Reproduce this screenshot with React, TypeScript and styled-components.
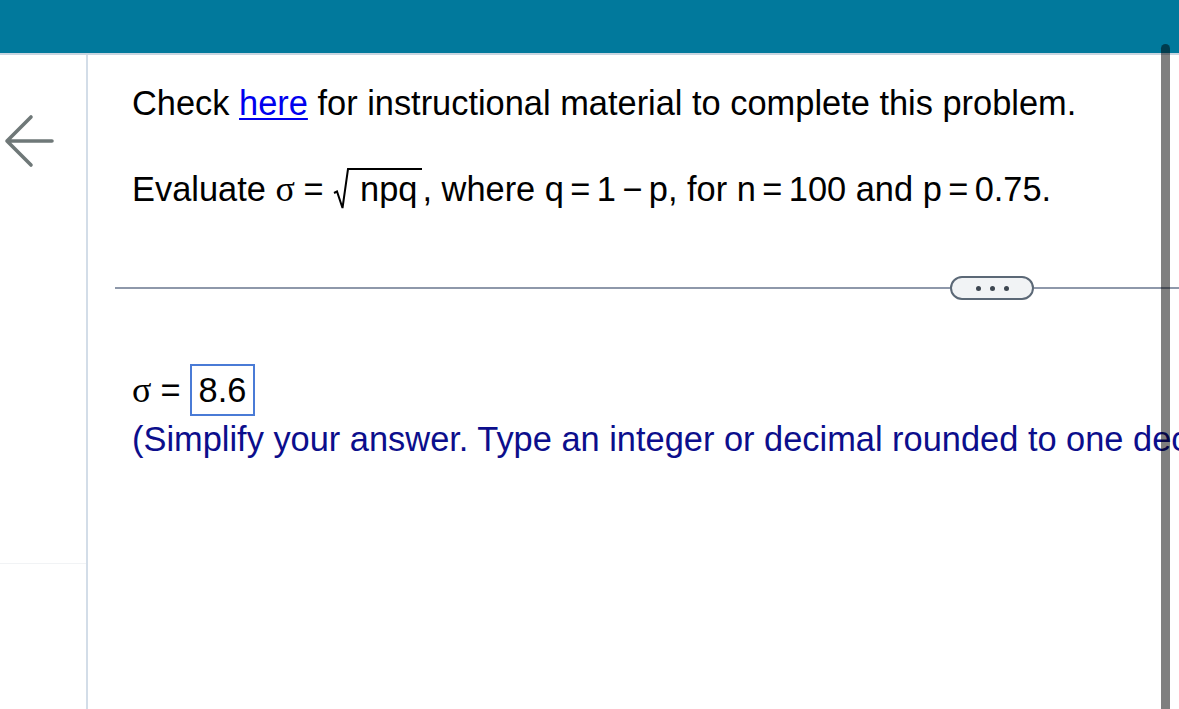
import React from 'react'
import styled, { createGlobalStyle } from 'styled-components'

const GlobalStyle = createGlobalStyle`
  html, body {
    margin: 0;
    padding: 0;
    background: #ffffff;
    overflow: hidden;
  }
  body {
    font-family: 'Liberation Sans', Arial, sans-serif;
  }
`

const Page = styled.div`
  position: relative;
  width: 1179px;
  height: 709px;
  display: flex;
  flex-direction: column;
  overflow: hidden;
  background: #ffffff;
`

const TopBar = styled.header`
  flex: 0 0 53px;
  background: #01799c;
  border-bottom: 2px solid #c9d5e0;
`

const Body = styled.div`
  flex: 1;
  display: flex;
  min-height: 0;
`

const Rail = styled.aside`
  flex: 0 0 86px;
  border-right: 2px solid #d3dde8;
  display: flex;
  flex-direction: column;
`

const BackButton = styled.button`
  margin: 59px 0 0 2px;
  width: 54px;
  height: 56px;
  padding: 0;
  border: none;
  background: transparent;
  display: flex;
  align-items: center;
  justify-content: center;
  cursor: pointer;
`

const RailRule = styled.div`
  margin-top: 393px;
  height: 1px;
  background: #f1f3f5;
`

const Content = styled.main`
  flex: 1;
  min-width: 0;
  padding: 29px 0 0 27px;
  overflow: hidden;
  font-size: 34.4px;
  line-height: 39px;
  color: #000000;
`

const Para = styled.p<{ $gap?: number }>`
  margin: 0 0 ${({ $gap }) => $gap ?? 0}px 17px;
  white-space: nowrap;
`

const Link = styled.a`
  color: #0000ee;
  text-decoration: underline;
  text-underline-offset: 3px;
  text-decoration-thickness: 2px;
`

const Sigma = styled.span`
  font-family: 'Liberation Serif', 'Times New Roman', serif;
  font-size: 36px;
`

// relation / operator sign with its own narrow spacing
const Op = styled.span<{ $space?: number }>`
  margin: 0 ${({ $space }) => $space ?? 6.4}px;
`

const Radical = styled.span`
  display: inline-flex;
  align-items: flex-start;
  vertical-align: -9px;
  height: 42px;
  margin-left: 1px;
`

const Vinculum = styled.span`
  border-top: 2px solid #000;
  padding: 0 5px 0 12px;
  margin-left: -1px;
  line-height: 38px;
`

const DividerRow = styled.div`
  display: flex;
  align-items: center;
  height: 24px;
  margin-bottom: 67px;
`

const Line = styled.div<{ $grow?: boolean }>`
  height: 2px;
  background: #8e98aa;
  flex: ${({ $grow }) => ($grow ? '1' : '0 0 auto')};
`

const MoreButton = styled.button`
  flex: 0 0 84px;
  height: 24px;
  border: 2px solid #5b6876;
  border-radius: 12px;
  background: #f1f3f5;
  display: flex;
  align-items: center;
  justify-content: center;
  gap: 9px;
  padding: 0;
`

const Dot = styled.span`
  width: 5px;
  height: 5px;
  border-radius: 50%;
  background: #3d4650;
`

const AnswerRow = styled.div`
  display: flex;
  align-items: center;
  gap: 8px;
  margin-left: 17px;
  height: 52px;
  margin-top: -3px;
`

const AnswerBox = styled.span`
  display: inline-flex;
  align-items: center;
  height: 48px;
  padding: 0 7px;
  border: 2px solid #4a7bd6;
`

const Hint = styled.p`
  margin: 4px 0 0 17px;
  color: #0c0e8c;
  white-space: nowrap;
`

const Scrollbar = styled.div`
  position: absolute;
  top: 44px;
  left: 1161px;
  width: 9px;
  bottom: 0;
  border-radius: 5px 5px 0 0;
  background: rgba(0, 0, 0, 0.5);
`

const ArrowLeftIcon = () => (
  <svg width="54" height="56" viewBox="0 0 54 56" fill="none">
    <path
      d="M5 27 H50 M5 27 L29 3 M5 27 L29 51"
      stroke="#6f7878"
      strokeWidth="3.6"
      strokeLinecap="round"
      strokeLinejoin="round"
    />
  </svg>
)

const RadicalSign = () => (
  <svg width="16" height="42" viewBox="0 0 16 42" fill="none">
    <path d="M1 25 L4 23.5 L9.5 40 L15 1 L17 1" stroke="#000" strokeWidth="2" strokeLinejoin="miter" />
  </svg>
)

export default function App() {
  return (
    <>
      <GlobalStyle />
      <Page>
        <TopBar />
        <Body>
          <Rail>
            <BackButton aria-label="Back">
              <ArrowLeftIcon />
            </BackButton>
            <RailRule />
          </Rail>
          <Content>
            <Para $gap={45}>
              Check <Link href="#">here</Link> for instructional material to complete this problem.
            </Para>
            <Para $gap={66}>
              Evaluate <Sigma>σ</Sigma>
              <Op $space={8.6}>=</Op>
              <Radical>
                <RadicalSign />
                <Vinculum>npq</Vinculum>
              </Radical>
              , where q<Op>=</Op>1<Op>−</Op>p, for n<Op>=</Op>100 and p<Op>=</Op>0.75.
            </Para>
            <DividerRow>
              <Line $grow />
              <MoreButton aria-label="More">
                <Dot />
                <Dot />
                <Dot />
              </MoreButton>
              <Line style={{ width: 145 }} />
            </DividerRow>
            <AnswerRow>
              <Sigma>σ</Sigma>
              <Op $space={1}>=</Op>
              <AnswerBox>8.6</AnswerBox>
            </AnswerRow>
            <Hint>(Simplify your answer. Type an integer or decimal rounded to one decimal place as needed.)</Hint>
          </Content>
        </Body>
        <Scrollbar />
      </Page>
    </>
  )
}
